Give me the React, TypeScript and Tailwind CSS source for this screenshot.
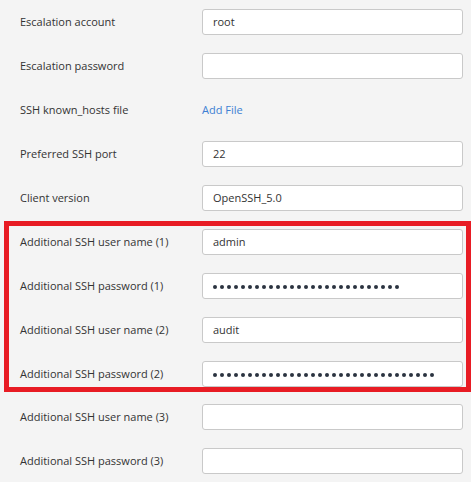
import React from "react";

type Field = {
  label: string;
  value?: string;
  dots?: number;
  link?: string;
};

const before: Field[] = [
  { label: "Escalation account", value: "root" },
  { label: "Escalation password", value: "" },
  { label: "SSH known_hosts file", link: "Add File" },
  { label: "Preferred SSH port", value: "22" },
  { label: "Client version", value: "OpenSSH_5.0" },
];

const highlighted: Field[] = [
  { label: "Additional SSH user name (1)", value: "admin" },
  { label: "Additional SSH password (1)", dots: 27 },
  { label: "Additional SSH user name (2)", value: "audit" },
  { label: "Additional SSH password (2)", dots: 32 },
];

const after: Field[] = [
  { label: "Additional SSH user name (3)", value: "" },
  { label: "Additional SSH password (3)", value: "" },
];

function Row({ field }: { field: Field }) {
  return (
    <div className="flex h-[26px] items-center">
      <div className="w-[182px] shrink-0 text-[11px] text-[#333333]">{field.label}</div>
      {field.link ? (
        <a href="#" className="text-[11px] text-[#3d7fd3]">
          {field.link}
        </a>
      ) : (
        <div className="flex h-[26px] w-[261px] items-center rounded-[3px] border border-[#c9c9c9] bg-white pl-[10px] text-[11px] text-[#333333]">
          {field.dots ? (
            <span className="flex gap-[3px] pt-[1px]">
              {Array.from({ length: field.dots }).map((_, i) => (
                <span key={i} className="h-[4px] w-[4px] rounded-full bg-[#2b3340]" />
              ))}
            </span>
          ) : (
            field.value
          )}
        </div>
      )}
    </div>
  );
}

export default function App() {
  return (
    <div
      className="min-h-[482px] w-[471px] bg-[#f4f4f4] pl-[20px] pt-[9px]"
      style={{ fontFamily: '"Open Sans", "Noto Sans", sans-serif' }}
    >
      <div className="flex flex-col gap-[18px]">
        {before.map((f) => (
          <Row key={f.label} field={f} />
        ))}
      </div>

      {/* highlighted group */}
      <div className="-ml-[16px] mt-[10px] flex flex-col gap-[18px] border-[5px] border-[#e81c24] pl-[11px] pt-[3px]">
        {highlighted.map((f) => (
          <Row key={f.label} field={f} />
        ))}
      </div>

      <div className="mt-[12px] flex flex-col gap-[18px]">
        {after.map((f) => (
          <Row key={f.label} field={f} />
        ))}
      </div>
    </div>
  );
}
